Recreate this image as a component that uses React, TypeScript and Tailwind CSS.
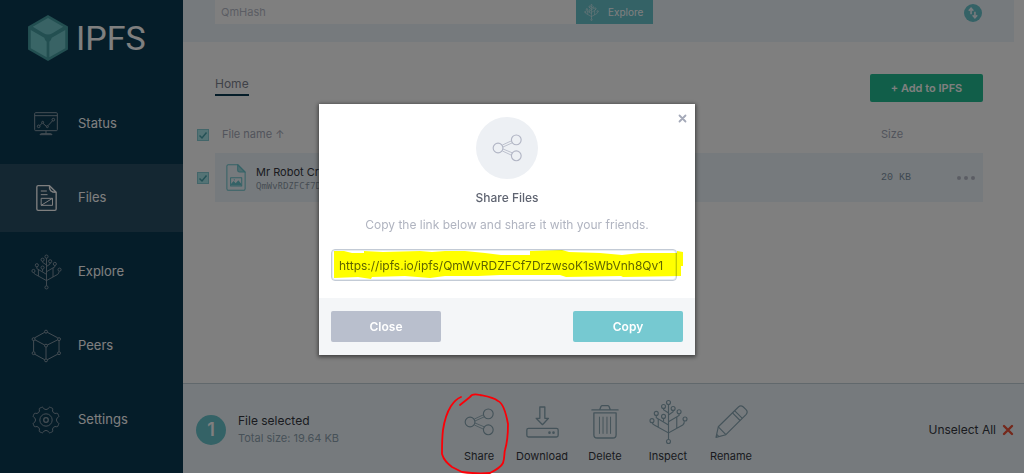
import { FC, ReactNode, useState } from "react";

type IconProps = { className?: string };

// Logo!
const IpfsCube: FC<IconProps> = ({ className }) => (
  <svg className={className} viewBox="0 0 118 136" aria-hidden="true">
    <path d="M59 0 118 34V102L59 136 0 102V34Z" fill="#469ea2"/>
    <path d="M59 9 104 35 72 54Q59 62 46 54L14 35Z" fill="#73c6cb"/>
    <path d="M8 44 48 67Q50 76 55 79V125L8 98Z" fill="#73cbcd"/>
    <path d="M110 44 70 67Q68 76 63 79V125L110 98Z" fill="#73c6cb"/>
  </svg>
);

const StatusIcon: FC<IconProps> = ({ className }) => (
  <svg className={className} viewBox="0 0 72 72" fill="none" stroke="currentColor" strokeWidth="3" aria-hidden="true">
    <rect x="2" y="2" width="68" height="54" rx="3"/>
    <path d="M2 11H70M36 56V66M18 68Q18 65 24 65H48Q54 65 54 68Z"/>
    <path d="M17 41 24 34M27 34 37 43M42 41 56 26"/>
    <circle cx="14" cy="43" r="4"/>
    <circle cx="26" cy="31" r="3"/>
    <circle cx="40" cy="44" r="3"/>
    <circle cx="58" cy="23" r="4"/>
  </svg>
);

const FilesIcon: FC<IconProps> = ({ className }) => (
  <svg className={className} viewBox="0 0 62 78" fill="none" stroke="currentColor" strokeWidth="4" strokeLinejoin="round" aria-hidden="true">
    <path d="M6 2H40L60 22V72Q60 76 56 76H6Q2 76 2 72V6Q2 2 6 2ZM40 2Q37 22 60 22"/>
    <path d="M14 18H32M14 29H34M15 40H49V61H15ZM15 61 49 40" strokeWidth="3"/>
  </svg>
);

const TreeIcon: FC<IconProps> = ({ className }) => (
  <svg className={className} viewBox="0 0 118 138" fill="none" stroke="currentColor" strokeWidth="3.5" aria-hidden="true">
    <path d="M59 16V122M44 28V32L59 42M73 34V38L59 48M22 49V56L59 78M44 58V67M91 44V49L59 68"/>
    <path d="M10 71Q11 76 16 78L59 102 102 78Q107 74 107 67M28 60V84M84 54V88"/>
    <circle cx="59" cy="10" r="6"/>
    <circle cx="59" cy="128" r="6"/>
    <circle cx="44" cy="22" r="6"/>
    <circle cx="73" cy="28" r="6"/>
    <circle cx="22" cy="43" r="6"/>
    <circle cx="44" cy="52" r="6"/>
    <circle cx="91" cy="38" r="6"/>
    <circle cx="9" cy="65" r="6"/>
    <circle cx="109" cy="60" r="6"/>
  </svg>
);

const PeersIcon: FC<IconProps> = ({ className }) => (
  <svg className={className} viewBox="0 0 92 104" fill="none" stroke="currentColor" strokeWidth="3" aria-hidden="true">
    <path d="M50 10 82 27M86 35V69M82 77 50 94M42 94 11 77M8 69V35M11 27 42 10M12 33 42 49M82 33 50 49M46 56V91"/>
    <circle cx="46" cy="8" r="4.5"/>
    <circle cx="86" cy="31" r="4.5"/>
    <circle cx="86" cy="74" r="4.5"/>
    <circle cx="46" cy="96" r="4.5"/>
    <circle cx="8" cy="74" r="4.5"/>
    <circle cx="8" cy="31" r="4.5"/>
    <circle cx="46" cy="51" r="4.5"/>
  </svg>
);

// eight teeth with a round notch between them
const polar = (r: number, deg: number) => {
  const a = (deg * Math.PI) / 180;
  return `${(43 + r * Math.sin(a)).toFixed(1)} ${(43 - r * Math.cos(a)).toFixed(1)}`;
};
const gearPath = [0, 45, 90, 135, 180, 225, 270, 315]
  .map((a, i) => `${i ? "L" : "M"}${polar(39, a - 13)}A9.5 9.5 0 0 0 ${polar(39, a + 13)}Q${polar(42, a + 15)} ${polar(41, a + 19)}L${polar(41, a + 26)}Q${polar(42, a + 30)} ${polar(39, a + 32)}`)
  .join("") + "Z";

const SettingsIcon: FC<IconProps> = ({ className }) => (
  <svg className={className} viewBox="0 0 86 86" fill="none" stroke="currentColor" strokeWidth="3" strokeLinejoin="round" aria-hidden="true">
    <path d={gearPath}/>
    <circle cx="43" cy="43" r="19"/>
    <circle cx="43" cy="43" r="7" strokeWidth="4"/>
  </svg>
);

const ShareIcon: FC<IconProps> = ({ className }) => (
  <svg className={className} viewBox="0 0 94 86" fill="none" stroke="currentColor" strokeWidth="3.5" aria-hidden="true">
    <circle cx="18" cy="43" r="15"/>
    <circle cx="74" cy="18" r="15"/>
    <circle cx="74" cy="67" r="15"/>
    <path d="M31 34 59 21M33 40 62 27M33 46 62 58M31 52 59 65" strokeWidth="2.5"/>
  </svg>
);

const DownloadIcon: FC<IconProps> = ({ className }) => (
  <svg className={className} viewBox="0 0 98 96" fill="none" stroke="currentColor" strokeWidth="4" strokeLinejoin="round" aria-hidden="true">
    <path d="M41 3H56V37H67L49 56 30 37H41Z"/>
    <rect x="2" y="67" width="94" height="26" rx="5"/>
    <circle cx="70" cy="80" r="2"/>
    <circle cx="82" cy="80" r="2"/>
  </svg>
);

const TrashIcon: FC<IconProps> = ({ className }) => (
  <svg className={className} viewBox="0 0 84 104" fill="none" stroke="currentColor" strokeWidth="4" strokeLinecap="round" strokeLinejoin="round" aria-hidden="true">
    <path d="M2 15H82M26 14 30 4Q31 2 34 2H50Q53 2 54 4L58 14M8 24H76V91Q76 101 66 101H18Q8 101 8 91Z"/>
    <path d="M25 37V87M36 37V87M48 37V87M59 37V87" strokeWidth="3"/>
  </svg>
);

const PencilIcon: FC<IconProps> = ({ className }) => (
  <svg className={className} viewBox="0 0 100 100" fill="none" stroke="currentColor" strokeWidth="3.5" strokeLinejoin="round" aria-hidden="true">
    <path d="M10 66 71 6Q78 -1 86 6L94 14Q101 21 94 29L33 90 3 98Z"/>
    <path d="M10 66 33 90M53 24 76 47M60 18 82 40M5 89 12 96"/>
  </svg>
);

const ImageFileIcon: FC<IconProps> = ({ className }) => (
  <svg className={className} viewBox="0 0 58 80" fill="none" stroke="currentColor" strokeWidth="3" strokeLinejoin="round" aria-hidden="true">
    <path d="M6 2H34L56 24V73Q56 78 51 78H7Q2 78 2 73V6Q2 2 6 2Z"/>
    <path d="M34 2V18Q34 24 40 24H56Z" fill="currentColor" fillOpacity="0.6"/>
    <rect x="13" y="41" width="33" height="24"/>
    <path d="M14 64V59L22 50 28 57 36 48 45 59V64Z" fill="currentColor" stroke="none"/>
    <circle cx="24" cy="47" r="2" fill="currentColor" stroke="none"/>
  </svg>
);

const SwapIcon: FC<IconProps> = ({ className }) => (
  <svg className={className} viewBox="0 0 56 56" aria-hidden="true">
    <circle cx="28" cy="28" r="28" fill="#69c4cd"/>
    <path d="M22 32V14M15 21 22 13 29 21M34 24V42M27 35 34 43 41 35" fill="none" stroke="#edf5fa" strokeWidth="5"/>
  </svg>
);

const CrossIcon: FC<IconProps> = ({ className }) => (
  <svg className={className} viewBox="0 0 12 12" fill="none" stroke="currentColor" strokeWidth="2.4" strokeLinecap="round" aria-hidden="true">
    <path d="M2 2 10 10M10 2 2 10"/>
  </svg>
);

const Checkbox: FC<{label: string}> = ({ label }) => (
  <label className="relative block size-3">
    <input type="checkbox" defaultChecked aria-label={label} className="peer block size-3 appearance-none border border-[#86cdd4] bg-[#a8e6ea]"/>
    <svg className="pointer-events-none absolute inset-0 hidden size-3 peer-checked:block" viewBox="0 0 12 12" fill="none" stroke="#4aa3ac" strokeWidth="1.5" aria-hidden="true">
      <path d="M2.500 6.500 5 9 9.500 3.500"/>
    </svg>
  </label>
);

const NavItem: FC<{name: string, icon: ReactNode, active?: boolean}> = ({ name, icon, active }) => (
  <a
    href={`#/${name.toLowerCase()}`}
    className={`flex h-[68px] items-center text-[13px] text-white ${active ? "bg-[#284e65]" : ""}`}
  >
    <span className={`ml-[30px] flex w-8 justify-center ${active ? "text-white" : "text-[#8a9ca8]"}`}>{icon}</span>
    <span className="ml-4">{name}</span>
  </a>
);

const Action: FC<{name: string, icon: ReactNode, children?: ReactNode}> = ({ name, icon, children }) => (
  <button className="relative flex w-[63px] flex-col items-center text-[11px] leading-4 text-[#34373f]">
    <span className="flex h-[52px] items-center text-[#8aa7b5]">{icon}</span>
    {name}
    {children}
  </button>
);

// Red pen ring around the share button
const PenRing = () => (
  <svg className="pointer-events-none absolute -top-[6px] -left-[10px] z-20 h-[84px] w-[75px]" viewBox="438 390 75 84" fill="none" stroke="#fb0007" strokeWidth="1.8" strokeLinecap="round" strokeLinejoin="round" aria-hidden="true">
    <path d="M461 397C456 399 453 403 451 406C446 414 444 423 443 430C442 438 442 446 442 454C444 461 448 464 452 467L462 472Q476 474 490 473C496 470 501 467 503 463C505 457 504 453 505 450C508 440 508 430 508 424C506 413 503 403 498 401C493 397 485 396 480 395Q472 393 470 397L460 405"/>
  </svg>
);

// Yellow marker over the link
const Marker = () => (
  <svg className="pointer-events-none absolute top-0 left-[2px] h-8 w-[350px] mix-blend-multiply" viewBox="333 249 350 32" aria-hidden="true">
    <path d="M334 251 344 251 352 253 364 253 364 251 383 252 420 251 432 252 445 251 465 251 485 253 501 255 530 255 530 251 562 250 569 252 600 253 622 255 640 253 677 253 677 251 683 252 683 266 681 266 681 276 623 277 621 276 566 277 560 275 500 275 478 276 445 276 430 278 405 276 372 277 371 279 358 277 334 278Z" fill="#ffff00"/>
  </svg>
);

const ShareModal: FC<{onClose: () => void}> = ({ onClose }) => (
  <div className="absolute inset-x-0 top-0 bottom-px z-10 flex items-start justify-center bg-black/50 pt-[104px] pr-[10px]">
    <div role="dialog" aria-label="Share Files" className="relative w-[376px] bg-white shadow-[0_1px_4px_1px_rgba(0,0,0,0.5)]">
      <button aria-label="Close dialog" onClick={onClose} className="absolute top-[10px] right-2 text-[#a4a9b8]">
        <CrossIcon className="size-[9px]"/>
      </button>
      <div className="flex flex-col items-center px-3 pt-[13px] pb-[17px]">
        <div className="flex size-[62px] items-center justify-center rounded-full bg-[#edf0f4] text-[#b2b6c5]">
          <ShareIcon className="h-7 w-[31px]"/>
        </div>
        <h2 className="mt-[9px] text-xs leading-5 font-medium text-[#5f6471]">Share Files</h2>
        <p className="mt-[7px] text-xs leading-5 text-[#b0b4c0]">Copy the link below and share it with your friends.</p>
        <div className="relative mt-[14px] w-full pr-[6px]">
          <input
            aria-label="Link"
            readOnly
            value="https://ipfs.io/ipfs/QmWvRDZFCf7DrzwsoK1sWbVnh8Qv1"
            className="block h-8 w-full rounded-sm border border-[#c3cbd6] px-[7px] text-xs text-[#5f6471] ring-1 ring-[#e6edf1] outline-none ring-inset"
          />
          <Marker/>
        </div>
      </div>
      <div className="flex justify-between bg-[#f4f6f8] px-3 py-[13px] text-xs font-semibold text-white">
        <button onClick={onClose} className="h-[31px] w-[110px] rounded-[2px] bg-[#b9bfcd]">Close</button>
        <button className="h-[31px] w-[110px] rounded-[2px] bg-[#76c9d1]">Copy</button>
      </div>
    </div>
  </div>
);

export default function App(){
  const [open, setOpen] = useState<boolean>(true);

  return(
    <div className="relative flex h-screen overflow-hidden bg-white pb-px font-[Inter,sans-serif]">
      <aside className="w-[183px] shrink-0 bg-[#0b3a53]">
        <a href="#/" className="flex h-[76px] items-center gap-2 pl-7 text-[34px] text-white">
          <IpfsCube className="h-[46px] w-10"/>
          <span className="font-[Roboto,sans-serif]">IPFS</span>
        </a>
        <nav className="mt-[14px] flex flex-col gap-[6px]">
          <NavItem name="Status" icon={<StatusIcon className="size-6"/>}/>
          <NavItem name="Files" active icon={<FilesIcon className="h-[26px] w-[21px]"/>}/>
          <NavItem name="Explore" icon={<TreeIcon className="h-9 w-[31px]"/>}/>
          <NavItem name="Peers" icon={<PeersIcon className="h-[34px] w-[30px]"/>}/>
          <NavItem name="Settings" icon={<SettingsIcon className="size-7"/>}/>
        </nav>
      </aside>

      <div className="flex min-w-0 flex-1 flex-col">
        <header className="mr-[10px] flex h-[42px] items-start bg-[#edf5fa] pr-8 pl-8">
          <input aria-label="QmHash" placeholder="QmHash" className="h-6 w-[361px] bg-white px-[6px] text-[11px] outline-none placeholder:text-[#b7bbc8]"/>
          <button className="flex h-6 w-[77px] items-center gap-[9px] bg-[#69c4cd] pl-2 text-[10px] text-white">
            <TreeIcon className="h-[17px] w-[15px]"/>
            Explore
          </button>
          <button aria-label="Connection" className="mt-1 ml-auto">
            <SwapIcon className="size-[18px]"/>
          </button>
        </header>

        <main className="flex-1 pr-[41px] pl-[14px]">
          <div className="mt-8 flex items-start justify-between pl-[18px]">
            <a href="#/files" className="border-b-2 border-[#0b3a53] text-xs leading-5 text-[#7f8491]">Home</a>
            <button className="h-7 w-[113px] rounded-[2px] bg-[#22bc92] text-[11px] font-semibold text-white">+ Add to IPFS</button>
          </div>
          <table className="mt-[14px] w-full text-left text-[11px]">
            <thead>
              <tr className="h-[37px] text-[#a4a9b8]">
                <th className="w-[18px] p-0"><Checkbox label="Select all files"/></th>
                <th className="py-0 pr-0 pl-[7px] font-normal">File name ↑</th>
                <th className="w-[70px] p-0 font-normal">Size</th>
                <th className="w-8 p-0"/>
              </tr>
            </thead>
            <tbody>
              <tr className="h-[49px]">
                <td className="p-0"><Checkbox label="Select file"/></td>
                <td className="bg-[#edf5fa] py-0 pr-0 pl-[11px]">
                  <div className="flex items-center gap-[10px] text-[#69c4cd]">
                    <ImageFileIcon className="h-[27px] w-5"/>
                    <div>
                      <div className="text-[11px] leading-4 text-[#34373f]">Mr Robot Cropped.jpg</div>
                      <div className="font-['Noto_Sans_Mono','DejaVu_Sans_Mono',monospace] text-[9px] leading-3 text-[#8a97a5]">QmWvRDZFCf7DrzwsoK1sWbVnh8Qv1</div>
                    </div>
                  </div>
                </td>
                <td className="bg-[#edf5fa] p-0 font-['Liberation_Mono',monospace] text-[10px] text-[#7f93a5]">20 KB</td>
                <td className="bg-[#edf5fa] p-0">
                  <button aria-label="More" className="ml-[6px] flex gap-[3px]">
                    <span className="size-1 rounded-full bg-[#b7bbc8]"/>
                    <span className="size-1 rounded-full bg-[#b7bbc8]"/>
                    <span className="size-1 rounded-full bg-[#b7bbc8]"/>
                  </button>
                </td>
              </tr>
            </tbody>
          </table>
        </main>

        <footer className="flex h-[90px] items-center border-t border-[#c3d0d8] bg-[#edf5fa] pt-[2px] pr-[10px] pl-[13px]">
          <div className="flex flex-1 items-center gap-3">
            <span className="flex size-[30px] items-center justify-center rounded-full bg-[#69c4cd] text-lg font-semibold text-white">1</span>
            <div>
              <div className="text-xs leading-4 text-[#34373f]">File selected</div>
              <div className="text-[11px] leading-[18px] text-[#8fa3b1]">Total size: 19.64 KB</div>
            </div>
          </div>
          <div className="flex">
            <Action name="Share" icon={<ShareIcon className="h-7 w-[31px]"/>}><PenRing/></Action>
            <Action name="Download" icon={<DownloadIcon className="h-8 w-[33px]"/>}/>
            <Action name="Delete" icon={<TrashIcon className="h-[34px] w-7"/>}/>
            <Action name="Inspect" icon={<TreeIcon className="h-[46px] w-[39px]"/>}/>
            <Action name="Rename" icon={<PencilIcon className="size-[33px]"/>}/>
          </div>
          <div className="flex flex-1 justify-end">
            <button className="flex items-center gap-[6px] text-xs text-[#34373f]">
              Unselect All
              <CrossIcon className="size-3 text-[#ea5037]"/>
            </button>
          </div>
        </footer>
      </div>

      {open && <ShareModal onClose={() => setOpen(false)}/>}
    </div>
  )
}
